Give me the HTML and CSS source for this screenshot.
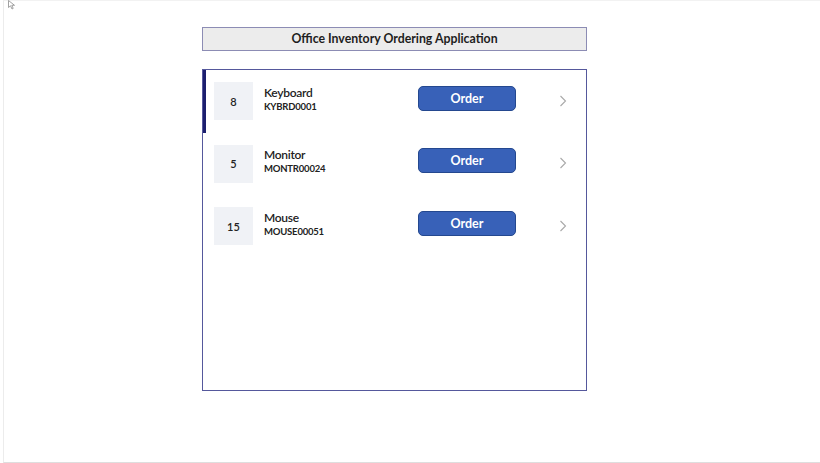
FILE: index.html
```html
<!DOCTYPE html>
<html lang="en">
<head>
    <meta charset="UTF-8">
    <meta name="viewport" content="width=device-width, initial-scale=1.0">
    <title>Office Inventory Ordering Application</title>
    <link rel="stylesheet" href="styles.css">
</head>
<body>

    <div class="screen">

        <!-- Pointer left over the canvas -->
        <svg class="cursor" width="8" height="10" viewBox="0 0 8 10">
            <path d="M0.5 0.5 L0.5 7.5 L2.5 5.8 L4 9 L5.2 8.4 L3.8 5.3 L6.5 5.3 Z" fill="#fff" stroke="#8a8a8a" stroke-width="0.8"/>
        </svg>

        <div class="app">
            <!-- Header -->
            <div class="title-bar">Office Inventory Ordering Application</div>

            <!-- Inventory Gallery -->
            <div class="gallery">
                <div class="item selected">
                    <div class="qty">8</div>
                    <div class="info">
                        <div class="name">Keyboard</div>
                        <div class="code">KYBRD0001</div>
                    </div>
                    <button class="order-btn">Order</button>
                    <svg class="chevron" width="8" height="12" viewBox="0 0 8 12">
                        <path d="M1.5 1 L6.5 6 L1.5 11" fill="none" stroke="#a9a9a9" stroke-width="1.1"/>
                    </svg>
                </div>

                <div class="item">
                    <div class="qty">5</div>
                    <div class="info">
                        <div class="name">Monitor</div>
                        <div class="code">MONTR00024</div>
                    </div>
                    <button class="order-btn">Order</button>
                    <svg class="chevron" width="8" height="12" viewBox="0 0 8 12">
                        <path d="M1.5 1 L6.5 6 L1.5 11" fill="none" stroke="#a9a9a9" stroke-width="1.1"/>
                    </svg>
                </div>

                <div class="item">
                    <div class="qty">15</div>
                    <div class="info">
                        <div class="name">Mouse</div>
                        <div class="code">MOUSE00051</div>
                    </div>
                    <button class="order-btn">Order</button>
                    <svg class="chevron" width="8" height="12" viewBox="0 0 8 12">
                        <path d="M1.5 1 L6.5 6 L1.5 11" fill="none" stroke="#a9a9a9" stroke-width="1.1"/>
                    </svg>
                </div>
            </div>
        </div>

    </div>

</body>
</html>
```

FILE: styles.css
```css
/* General Reset */
* {
    margin: 0;
    padding: 0;
    box-sizing: border-box;
    font-family: 'Lato', 'Open Sans', sans-serif;
}

body {
    width: 820px;
    height: 463px;
    background-color: #fff;
    overflow: hidden;
}

/* Canvas frame */
.screen {
    position: relative;
    height: 463px;
    margin-left: 3px;
    border-left: 1px solid #ececec;
    border-top: 1px solid #f2f2f2;
    border-bottom: 1px solid #dedede;
    padding-top: 26px;
    padding-left: 198px;
}

.cursor {
    position: absolute;
    left: 4px;
    top: -1px;
}

.app {
    width: 385px;
}

/* Title Bar */
.title-bar {
    height: 24px;
    background-color: #ececec;
    border: 1px solid #8c8cb4;
    color: #1e1e1e;
    font-size: 12.3px;
    font-weight: bold;
    text-align: center;
    line-height: 22px;
}

/* Gallery */
.gallery {
    margin-top: 18px;
    height: 322px;
    border: 1px solid #55589c;
}

.item {
    display: flex;
    align-items: center;
    height: 62.5px;
    padding-left: 11px;
}

.item.selected {
    box-shadow: inset 3px 0 0 #1c1f6e;
}

.qty {
    width: 39px;
    height: 38px;
    background-color: #f0f2f6;
    color: #222;
    font-size: 11px;
    font-weight: 600;
    display: flex;
    align-items: center;
    justify-content: center;
}

.info {
    width: 165px;
    padding-left: 11px;
    margin-top: -4px;
}

.name {
    font-size: 12px;
    font-weight: 600;
    color: #222;
    line-height: 14px;
    letter-spacing: -0.3px;
}

.code {
    font-size: 9.5px;
    font-weight: bold;
    color: #222;
    line-height: 13px;
    letter-spacing: -0.2px;
}

/* Order Button */
.order-btn {
    width: 98px;
    height: 25px;
    margin-top: -6px;
    background-color: #3861b8;
    border: 1px solid #24488f;
    border-radius: 5px;
    color: #fff;
    font-size: 12.5px;
    font-weight: bold;
    cursor: pointer;
}

.chevron {
    margin-left: 43px;
    margin-top: -1px;
}
```
